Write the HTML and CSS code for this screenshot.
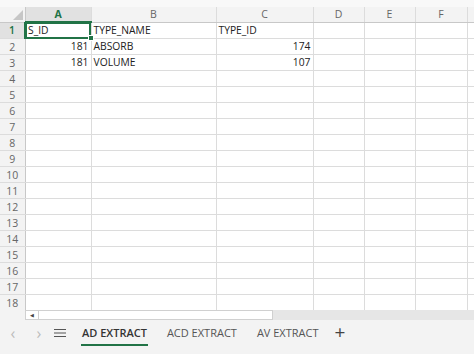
FILE: index.html
```html
<!DOCTYPE html>
<html lang="en">

<head>
    <meta charset="UTF-8">
    <title>AD EXTRACT</title>
    <link rel="stylesheet" href="styles.css">
</head>

<body>
    <div class="book">
        <div class="top-strip"></div>

        <div class="sheet">
            <table class="grid">
                <colgroup>
                    <col style="width: 25px">
                    <col style="width: 66px">
                    <col style="width: 125px">
                    <col style="width: 97px">
                    <col style="width: 51px">
                    <col style="width: 51px">
                    <col style="width: 52px">
                    <col style="width: 60px">
                </colgroup>
                <thead>
                    <tr>
                        <th class="corner"><span class="corner-mark"></span></th>
                        <th class="active-col">A</th>
                        <th>B</th>
                        <th>C</th>
                        <th>D</th>
                        <th>E</th>
                        <th>F</th>
                        <th></th>
                    </tr>
                </thead>
                <tbody id="rows">
                    <tr>
                        <th class="active-row">1</th>
                        <td class="selected">S_ID<span class="handle"></span></td>
                        <td>TYPE_NAME</td>
                        <td>TYPE_ID</td>
                        <td></td><td></td><td></td><td></td>
                    </tr>
                    <tr>
                        <th>2</th>
                        <td class="num">181</td>
                        <td>ABSORB</td>
                        <td class="num">174</td>
                        <td></td><td></td><td></td><td></td>
                    </tr>
                    <tr>
                        <th>3</th>
                        <td class="num">181</td>
                        <td>VOLUME</td>
                        <td class="num">107</td>
                        <td></td><td></td><td></td><td></td>
                    </tr>
                </tbody>
            </table>
        </div>

        <div class="scroll-row">
            <div class="scroll-spacer"></div>
            <div class="scroll-arrow">&#9664;</div>
            <div class="scroll-thumb"></div>
            <div class="scroll-track"></div>
        </div>

        <div class="tabs">
            <span class="nav">&lsaquo;</span>
            <span class="nav">&rsaquo;</span>
            <span class="menu">
                <svg width="12" height="10" viewBox="0 0 12 10">
                    <path d="M0 1.5h12M0 5h12M0 8.5h12" stroke="#555" stroke-width="1.2" fill="none"/>
                </svg>
            </span>
            <span class="tab active">AD EXTRACT</span>
            <span class="tab">ACD EXTRACT</span>
            <span class="tab">AV EXTRACT</span>
            <span class="add">+</span>
        </div>
    </div>

    <script>
        // empty rows 4 - 18
        var body = document.getElementById("rows");
        for (var i = 4; i <= 18; i++) {
            var tr = document.createElement("tr");
            var th = document.createElement("th");
            th.textContent = i;
            tr.appendChild(th);
            for (var j = 0; j < 7; j++) {
                tr.appendChild(document.createElement("td"));
            }
            body.appendChild(tr);
        }
    </script>
</body>

</html>
```

FILE: styles.css
```css
body {
    margin: 0;
    background: #fff;
    font-family: "Open Sans", "Liberation Sans", sans-serif;
    color: #222;
}

.book {
    width: 474px;
    height: 354px;
    overflow: hidden;
    display: flex;
    flex-direction: column;
}

.top-strip {
    height: 7px;
    background: #f8f8f8;
}

/* Grid */
.sheet {
    height: 303px;
    overflow: hidden;
}

.grid {
    border-collapse: collapse;
    table-layout: fixed;
    width: 527px;
}

.grid th,
.grid td {
    padding: 0;
    height: 15px;
    border: 1px solid #dcdcdc;
    border-top: none;
    border-left: none;
    white-space: nowrap;
    overflow: hidden;
}

.grid thead th {
    height: 14px;
    background: #f3f3f3;
    color: #666;
    font-weight: normal;
    font-size: 10.5px;
    line-height: 14px;
    text-align: center;
    border-bottom-color: #c8c8c8;
    border-right-color: #dcdcdc;
}

.grid thead th.corner {
    position: relative;
    border-right-color: #c8c8c8;
}

.corner-mark {
    position: absolute;
    right: 2px;
    bottom: 2px;
    width: 0;
    height: 0;
    border-left: 10px solid transparent;
    border-bottom: 10px solid #c6c6c6;
}

.grid thead th.active-col {
    background: #e1e1e1;
    color: #217346;
    font-weight: bold;
    border-bottom: 2px solid #217346;
}

.grid tbody th {
    background: #f3f3f3;
    color: #666;
    font-weight: normal;
    font-size: 10.5px;
    text-align: center;
    border-right-color: #c8c8c8;
    border-bottom-color: #dcdcdc;
}

.grid tbody th.active-row {
    background: #e1e1e1;
    color: #217346;
    font-weight: 600;
    border-right: 2px solid #217346;
}

.grid td {
    font-size: 10.3px;
    line-height: 15px;
    padding: 0 2px;
}

.grid td.num {
    text-align: right;
}

.grid td.selected {
    position: relative;
    overflow: visible;
    outline: 2px solid #217346;
    outline-offset: -2px;
}

.handle {
    position: absolute;
    right: -3px;
    bottom: -3px;
    width: 4px;
    height: 4px;
    background: #217346;
    border: 1px solid #fff;
}

/* Horizontal scroll bar */
.scroll-row {
    display: flex;
    height: 10px;
    background: #e6e6e6;
}

.scroll-spacer {
    width: 25px;
    background: #f3f3f3;
}

.scroll-arrow {
    width: 14px;
    background: #fff;
    border: 1px solid #d0d0d0;
    box-sizing: border-box;
    font-size: 5px;
    line-height: 8px;
    text-align: center;
    color: #444;
}

.scroll-thumb {
    width: 234px;
    background: #fff;
    border: 1px solid #d0d0d0;
    border-left: none;
    box-sizing: border-box;
}

.scroll-track {
    flex: 1;
}

/* Sheet tabs */
.tabs {
    flex: 1;
    display: flex;
    align-items: flex-start;
    padding-top: 2px;
    background: #f3f3f3;
    font-size: 11px;
    color: #555;
}

.nav {
    width: 26px;
    text-align: center;
    color: #bbb;
    font-size: 16px;
    line-height: 22px;
}

.menu {
    display: flex;
    margin-left: 2px;
    margin-top: 6px;
    width: 27px;
}

.tab {
    padding: 0 1px;
    line-height: 22px;
    margin-right: 18px;
    border-bottom: 2px solid transparent;
}

.tab.active {
    color: #333;
    font-weight: 600;
    border-bottom-color: #217346;
}

.add {
    font-size: 19px;
    line-height: 21px;
    color: #444;
    margin-left: -3px;
    font-weight: normal;
}
```
